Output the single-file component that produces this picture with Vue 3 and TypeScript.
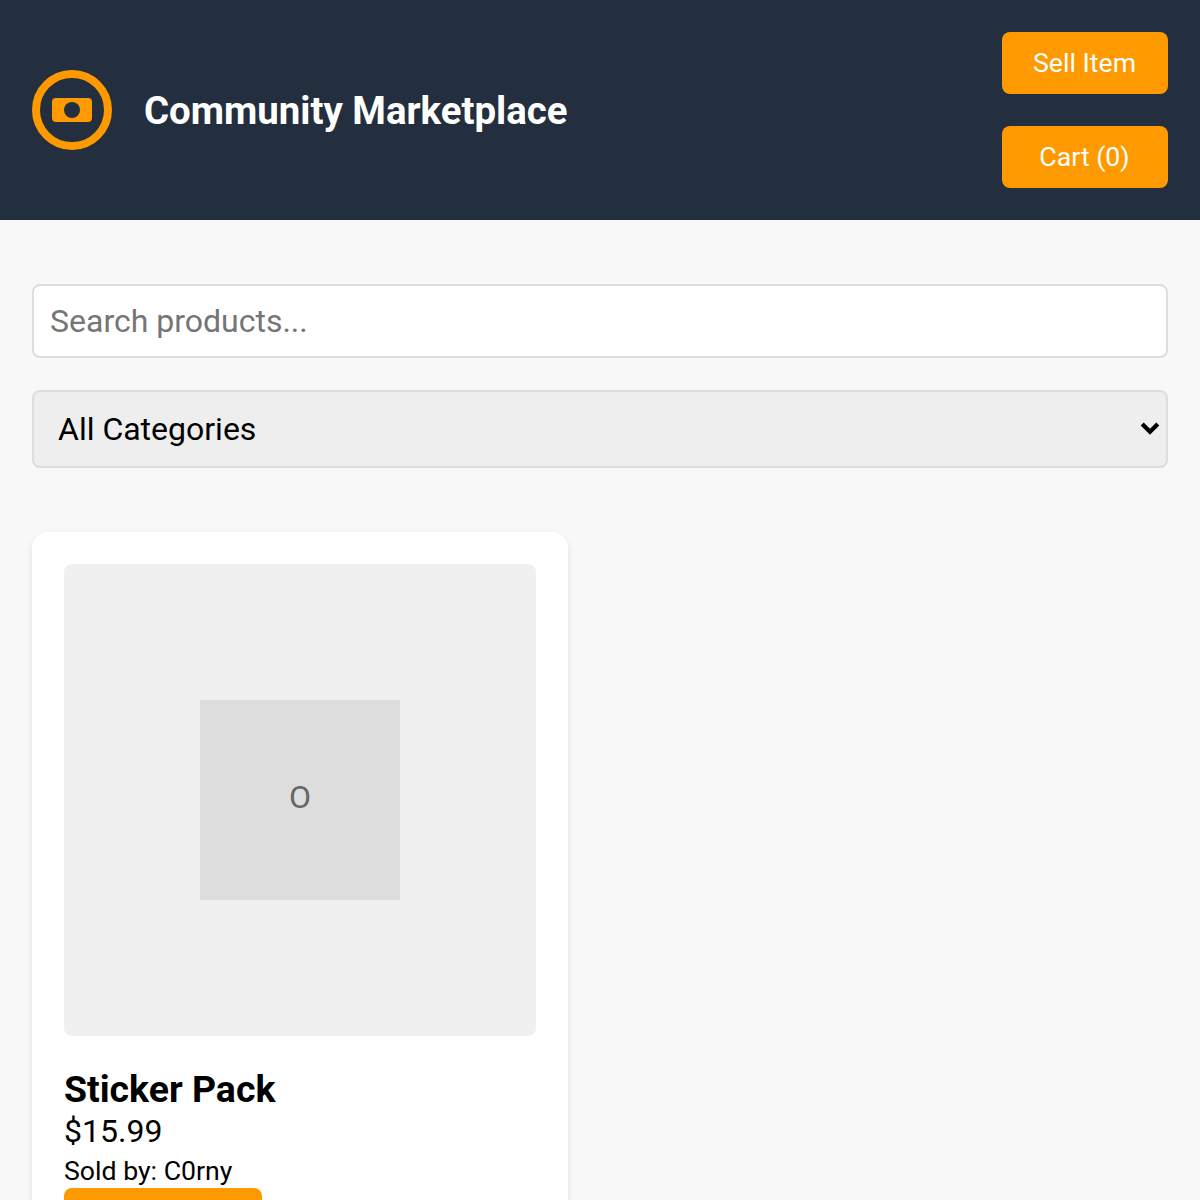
<script setup lang="ts">
import { ref } from 'vue'

interface Product {
  name: string
  price: number
  seller: string
}

const search = ref('')
const category = ref('all')
const cartCount = ref(0)
const products: Product[] = [{ name: 'Sticker Pack', price: 15.99, seller: 'C0rny' }]
</script>

<template>
  <div class="page">
    <header class="header">
      <div class="brand">
        <svg class="logo" viewBox="0 0 80 80" aria-hidden="true">
          <circle cx="40" cy="40" r="36" fill="none" stroke="#ff9900" stroke-width="8" />
          <rect x="20" y="28" width="40" height="24" rx="4" fill="#ff9900" />
          <circle cx="40" cy="40" r="8" fill="#232f3e" />
        </svg>
        <h1>Community Marketplace</h1>
      </div>
      <div class="actions">
        <button class="btn">Sell Item</button>
        <button class="btn">Cart ({{ cartCount }})</button>
      </div>
    </header>
    <main class="main">
      <div class="filters">
        <input v-model="search" class="search" type="text" placeholder="Search products..." />
        <div class="select-wrap">
          <select v-model="category" class="category">
            <option value="all">All Categories</option>
          </select>
          <svg class="chevron" viewBox="0 0 20 14" aria-hidden="true">
            <path d="M2.2 3 L10 10.8 L17.8 3" fill="none" stroke="#000" stroke-width="4.3" />
          </svg>
        </div>
      </div>
      <div class="grid">
        <article v-for="p in products" :key="p.name" class="card">
          <div class="image">
            <svg viewBox="0 0 200 200" class="thumb">
              <rect width="200" height="200" fill="#ddd" />
              <text x="100" y="108" text-anchor="middle" fill="#666">O</text>
            </svg>
          </div>
          <h3>{{ p.name }}</h3>
          <p class="price">${{ p.price }}</p>
          <p class="seller">Sold by: {{ p.seller }}</p>
          <button class="btn add" aria-label="Add to Cart"></button>
        </article>
      </div>
    </main>
  </div>
</template>

<style>
body {
  margin: 0;
  background: #f8f8f8;
  overflow: hidden;
}
</style>

<style scoped>
* {
  box-sizing: border-box;
  margin: 0;
  padding: 0;
}
.page {
  height: 1200px;
  overflow: hidden;
  background: #f8f8f8;
  color: #000;
  font-family: Roboto, sans-serif;
  font-size: 32px;
}
.header {
  display: flex;
  justify-content: space-between;
  align-items: center;
  height: 220px;
  padding: 32px;
  background: #232f3e;
  color: #fff;
}
.brand {
  display: flex;
  align-items: center;
  gap: 32px;
}
.logo {
  width: 80px;
  height: 80px;
}
h1 {
  padding-top: 2px;
  font-size: 38.4px;
  line-height: 46px;
  font-weight: 700;
}
.actions {
  display: flex;
  flex-direction: column;
  gap: 32px;
  width: 166px;
}
.btn {
  height: 62px;
  padding-right: 1px;
  border: 0;
  border-radius: 8px;
  background: #ff9900;
  color: #fff;
  font-family: inherit;
  font-size: 26.67px;
}
.main {
  padding: 64px 32px 0;
}
.filters {
  display: flex;
  flex-direction: column;
  gap: 32px;
}
.search {
  height: 74px;
  padding: 0 16px;
  border: 2px solid #ddd;
  border-radius: 8px;
  background: #fff;
  font: 32px Roboto, sans-serif;
}
.search::placeholder {
  color: #757575;
}
.select-wrap {
  position: relative;
}
.category {
  display: block;
  width: 100%;
  height: 78px;
  padding: 0 24px;
  border: 2px solid #ddd;
  border-radius: 8px;
  appearance: none;
  background: #eee;
  color: #000;
  font: 32px Roboto, sans-serif;
}
.chevron {
  position: absolute;
  right: 8px;
  top: 31px;
  width: 20px;
  height: 14px;
}
.grid {
  display: grid;
  grid-template-columns: repeat(2, 1fr);
  gap: 64px;
  padding-top: 64px;
}
.card {
  height: 760px;
  padding: 32px;
  border-radius: 16px;
  background: #fff;
  box-shadow: 0 4px 8px rgba(0, 0, 0, 0.1);
}
.image {
  display: flex;
  align-items: center;
  justify-content: center;
  height: 472px;
  margin-bottom: 32px;
  border-radius: 8px;
  background: #f0f0f0;
}
.thumb {
  width: 200px;
  height: 200px;
}
.thumb text {
  font-size: 32px;
}
h3 {
  font-size: 37.44px;
  line-height: 42px;
}
.price {
  padding-top: 2px;
  line-height: 38px;
}
.seller {
  padding-top: 4px;
  font-size: 26.67px;
  line-height: 34px;
}
.add {
  display: block;
  width: 198px;
}
</style>
